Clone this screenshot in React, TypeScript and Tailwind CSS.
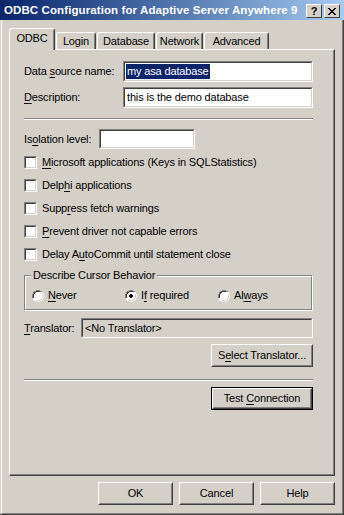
import React from "react"

const U = ({ children }: { children: React.ReactNode }) => (
  <span className="underline underline-offset-[2px] decoration-1">{children}</span>
)

// classic raised 3D button
const Btn = ({ children, w, def }: { children: React.ReactNode; w: string; def?: boolean }) => {
  const body = (
    <div className="h-full border border-t-white border-l-white border-b-[#404040] border-r-[#404040]">
      <div className="h-full border border-t-[#d4d0c8] border-l-[#d4d0c8] border-b-[#808080] border-r-[#808080] flex items-center justify-center">
        <span>{children}</span>
      </div>
    </div>
  )
  if (def)
    return <div className={`${w} h-[23px] border border-black`}>{body}</div>
  return <div className={`${w} h-[23px]`}>{body}</div>
}

// sunken edit field
const Field = ({ w, h, gray, children }: { w: string; h: string; gray?: boolean; children?: React.ReactNode }) => (
  <div className={`${w} ${h} border border-t-[#808080] border-l-[#808080] border-b-white border-r-white`}>
    <div className={`h-full border border-t-[#404040] border-l-[#404040] border-b-[#d4d0c8] border-r-[#d4d0c8] flex items-center pl-[1px] ${gray ? "bg-[#d4d0c8]" : "bg-white"}`}>
      {children}
    </div>
  </div>
)

const Check = ({ children }: { children: React.ReactNode }) => (
  <div className="h-[23px] flex items-center">
    <div className="w-[13px] h-[13px] border border-t-[#808080] border-l-[#808080] border-b-white border-r-white">
      <div className="h-full border border-t-[#404040] border-l-[#404040] border-b-[#d4d0c8] border-r-[#d4d0c8] bg-white" />
    </div>
    <span className="ml-[5px]">{children}</span>
  </div>
)

const Radio = ({ on, children }: { on?: boolean; children: React.ReactNode }) => (
  <div className="w-[103px] flex items-center">
    <svg width="12" height="12" viewBox="0 0 12 12" shapeRendering="crispEdges">
      <path d="M4 0h4v1h2v1h1v2h1v4h-1v2h-1v1h-2v1h-4v-1h-2v-1h-1v-2h-1v-4h1v-2h1v-1h2z" fill="#ffffff" />
      <path d="M4 0h4v1h2v1h-2v-1h-4v1h-2v2h-1v4h-1v-4h1v-2h1v-1h2z" fill="#808080" />
      <path d="M4 1h4v1h-4v2h-2v4h-1v-4h1v-2h2z" fill="#404040" />
      <path d="M4 2h4v1h1v1h1v4h-1v1h-1v1h-4v-1h-1v-1h-1v-4h1v-1h1z" fill="#ffffff" />
      <path d="M10 4h1v4h-1v2h-2v1h-4v-1h4v-1h1v-1h1z" fill="#d4d0c8" />
      {on && <path d="M5 4h2v1h1v2h-1v1h-2v-1h-1v-2h1z" fill="#000000" />}
    </svg>
    <span className="ml-[4px]">{children}</span>
  </div>
)

const Tab = ({ label, w, sel }: { label: string; w: string; sel?: boolean }) => (
  <div
    className={`${w} ${sel ? "h-[22px] -mb-[1px] z-10 pb-[3px]" : "h-[17px]"} relative bg-[#d4d0c8] rounded-t-[3px] border-t border-l border-r border-t-white border-l-white border-r-[#404040] flex items-center justify-center`}
  >
    <div className="absolute right-0 top-[1px] bottom-0 w-[1px] bg-[#808080]" />
    {label}
  </div>
)

const Etched = () => <div className="h-[2px] border-t border-t-[#808080] border-b border-b-white" />

export default function App() {
  return (
    <div className="w-[344px] h-[515px] bg-[#d4d0c8] flex flex-col font-['Liberation_Sans',Arial,sans-serif] text-[11px] text-black leading-none select-none">
      {/* title bar */}
      <div className="h-[20px] bg-linear-to-r from-[#0a246a] to-[#a6caf0] flex items-center pl-[4px] pr-[4px] pt-[2px]">
        <span className="text-white font-bold text-[11.5px] tracking-[0.1px]">ODBC Configuration for Adaptive Server Anywhere 9</span>
        <div className="ml-auto flex gap-[2px]">
          <div className="w-[16px] h-[14px] border border-t-white border-l-white border-b-[#404040] border-r-[#404040] bg-[#d4d0c8] flex items-center justify-center font-bold text-[11px]">
            ?
          </div>
          <div className="w-[16px] h-[14px] border border-t-white border-l-white border-b-[#404040] border-r-[#404040] bg-[#d4d0c8] flex items-center justify-center">
            <svg width="8" height="7" viewBox="0 0 8 7" shapeRendering="crispEdges">
              <path d="M0 0h2l2 2.5l2-2.5h2l-3 3.5l3 3.5h-2l-2-2.5l-2 2.5h-2l3-3.5z" fill="#000" />
            </svg>
          </div>
        </div>
      </div>

      {/* body */}
      <div className="flex-1 border-r border-b border-[#404040] tracking-[-0.15px]">
        <div className="h-full ml-[1px] border-l border-white border-r border-b border-r-[#808080] border-b-[#808080] flex flex-col px-[7px]">
          {/* tabs */}
          <div className="h-[29px] flex items-end">
            <Tab label="ODBC" w="w-[46px]" sel />
            <div className="ml-[1px]" />
            <Tab label="Login" w="w-[40px]" />
            <div className="ml-[1px]" />
            <Tab label="Database" w="w-[58px]" />
            <div className="ml-[1px]" />
            <Tab label="Network" w="w-[47px]" />
            <div className="ml-[1px]" />
            <Tab label="Advanced" w="w-[65px]" />
          </div>

          {/* tab page */}
          <div className="w-[326px] h-[427px] border border-t-white border-l-white border-b-[#404040] border-r-[#404040]">
            <div className="h-full border-r border-b border-[#808080] pl-[14px]">
              <div className="w-[289px] flex flex-col">
                <div className="mt-[11px] h-[21px] flex items-center">
                  <span className="w-[99px]">
                    Data <U>s</U>ource name:
                  </span>
                  <Field w="w-[190px]" h="h-[21px]">
                    <span className="bg-[#0a246a] text-white px-[1px] py-[2px]">my asa database</span>
                  </Field>
                </div>
                <div className="mt-[5px] h-[21px] flex items-center">
                  <span className="w-[99px]">
                    <U>D</U>escription:
                  </span>
                  <Field w="w-[190px]" h="h-[21px]">
                    <span className="px-[1px]">this is the demo database</span>
                  </Field>
                </div>
                <div className="mt-[10px]">
                  <Etched />
                </div>
                <div className="mt-[9px] h-[20px] flex items-center">
                  <span className="w-[75px]">
                    Is<U>o</U>lation level:
                  </span>
                  <Field w="w-[96px]" h="h-[20px]" />
                </div>
                <div className="mt-[2px] flex flex-col">
                  <Check>
                    <U>M</U>icrosoft applications (Keys in SQLStatistics)
                  </Check>
                  <Check>
                    Delp<U>h</U>i applications
                  </Check>
                  <Check>
                    Supp<U>r</U>ess fetch warnings
                  </Check>
                  <Check>
                    <U>P</U>revent driver not capable errors
                  </Check>
                  <Check>
                    Delay A<U>u</U>toCommit until statement close
                  </Check>
                </div>

                {/* group box */}
                <div className="mt-[9px] relative h-[36px] border border-t-[#808080] border-l-[#808080] border-b-white border-r-white">
                  <div className="h-full border border-t-white border-l-white border-b-[#808080] border-r-[#808080] flex items-center pt-[5px] pl-[6px]">
                    <Radio>
                      <U>N</U>ever
                    </Radio>
                    <Radio on>
                      I<U>f</U> required
                    </Radio>
                    <Radio>
                      Al<U>w</U>ays
                    </Radio>
                  </div>
                  <span className="absolute left-[6px] -top-[6px] bg-[#d4d0c8] px-[2px]">Describe Cursor Behavior</span>
                </div>

                <div className="mt-[7px] h-[20px] flex items-center">
                  <span className="w-[57px]">
                    <U>T</U>ranslator:
                  </span>
                  <Field w="w-[232px]" h="h-[20px]" gray>
                    <span className="px-[1px]">&lt;No Translator&gt;</span>
                  </Field>
                </div>
                <div className="mt-[6px] flex justify-end">
                  <Btn w="w-[102px]">
                    S<U>e</U>lect Translator...
                  </Btn>
                </div>
                <div className="mt-[12px]">
                  <Etched />
                </div>
                <div className="mt-[6px] flex justify-end">
                  <Btn w="w-[102px]" def>
                    Test <U>C</U>onnection
                  </Btn>
                </div>
              </div>
            </div>
          </div>

          {/* dialog buttons */}
          <div className="mt-[6px] flex justify-end gap-[6px]">
            <Btn w="w-[75px]">OK</Btn>
            <Btn w="w-[75px]">Cancel</Btn>
            <Btn w="w-[75px]">Help</Btn>
          </div>
        </div>
      </div>
    </div>
  )
}
